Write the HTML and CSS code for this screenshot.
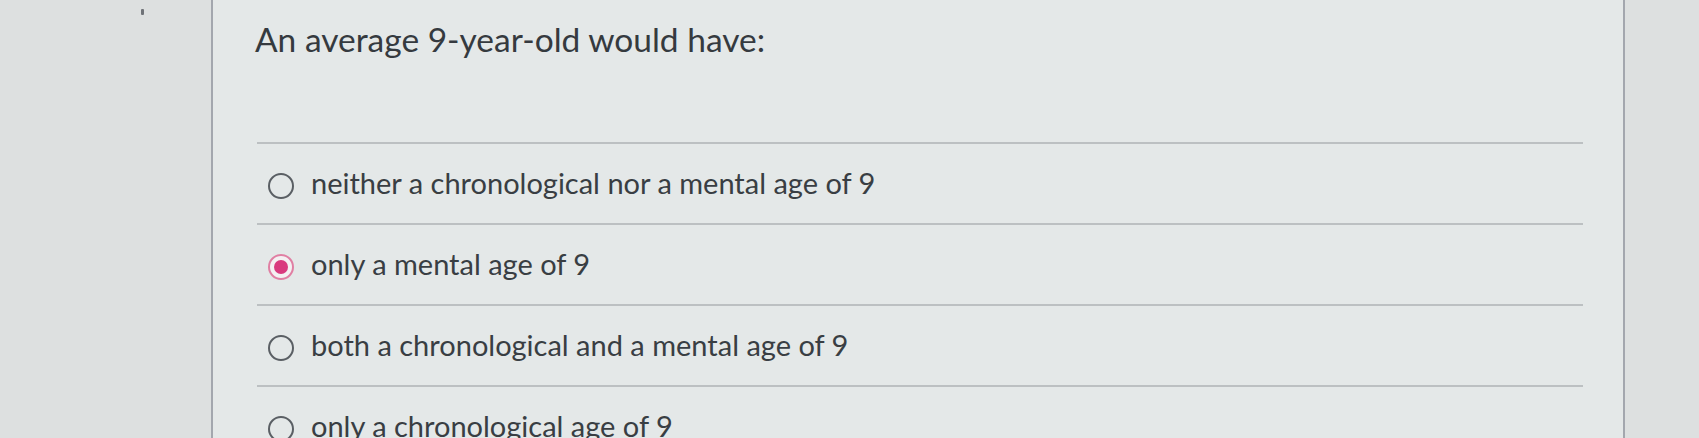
FILE: index.html
```html
<!DOCTYPE html>
<html lang="en">
<head>
<meta charset="utf-8">
<title>Question</title>
<link rel="stylesheet" href="styles.css">
</head>
<body>
<div class="page">
  <aside class="side side-left"><span class="speck"></span></aside>
  <main class="card">
    <h1 class="question">An average 9-year-old would have:</h1>
    <ul class="options">
      <li class="option">
        <span class="radio"></span>
        <span class="label">neither a chronological nor a mental age of 9</span>
      </li>
      <li class="option">
        <span class="radio radio-checked"></span>
        <span class="label">only a mental age of 9</span>
      </li>
      <li class="option">
        <span class="radio"></span>
        <span class="label">both a chronological and a mental age of 9</span>
      </li>
      <li class="option">
        <span class="radio"></span>
        <span class="label">only a chronological age of 9</span>
      </li>
    </ul>
  </main>
  <aside class="side side-right"></aside>
</div>
</body>
</html>
```
FILE: styles.css
```css
html, body {
  margin: 0;
  padding: 0;
  height: 100%;
  overflow: hidden;
}
body {
  background: #dcdfdf;
  font-family: Lato, "Open Sans", sans-serif;
  color: #3b4044;
}
.page {
  display: flex;
  height: 438px;
}
.side {
  background: #dde0e0;
}
.side-left {
  width: 211px;
  flex: none;
  position: relative;
}
.speck {
  position: absolute;
  left: 141px;
  top: 9px;
  width: 3px;
  height: 6px;
  border-radius: 1px;
  background: #6f7378;
}
.side-right {
  flex: 1;
}
.card {
  width: 1414px;
  flex: none;
  background: #e4e8e8;
  border-left: 2px solid #a3a7ae;
  border-right: 2px solid #a3a7ae;
  padding: 19px 40px 0 42px;
  box-sizing: border-box;
}
.question {
  margin: 0;
  font-weight: 400;
  font-size: 33.5px;
  line-height: 1.2;
  color: #353a3f;
  height: 123px;
}
.options {
  list-style: none;
  margin: 0;
  padding: 0 0 0 2px;
}
.option {
  display: flex;
  align-items: center;
  gap: 17px;
  height: 79px;
  border-top: 2px solid #bcc0c2;
  padding-left: 11px;
}
.radio {
  width: 26px;
  height: 26px;
  border: 2px solid #5a5f64;
  border-radius: 50%;
  box-sizing: border-box;
  flex: none;
  margin-top: 4px;
  position: relative;
}
.radio-checked {
  border-color: #e07fa3;
  background: #f4f0f2;
}
.radio-checked::after {
  content: "";
  position: absolute;
  left: 4px;
  top: 4px;
  width: 14px;
  height: 14px;
  border-radius: 50%;
  background: #d93a7e;
}
.label {
  font-size: 29px;
  line-height: 1.2;
  color: #393e43;
}
```
